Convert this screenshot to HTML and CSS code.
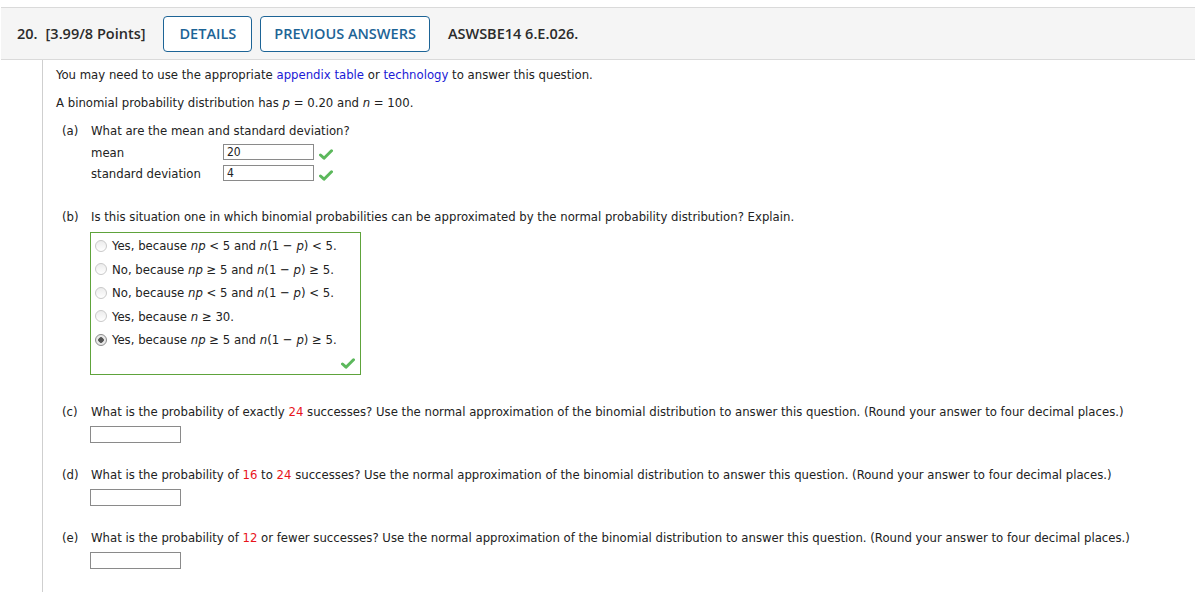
FILE: index.html
```html
<!DOCTYPE html>
<html lang="en">
<head>
    <meta charset="UTF-8">
    <title>Question 20</title>
    <link rel="stylesheet" href="styles.css">
</head>
<body>
    <div class="question-header">
        <span class="q-number">20.</span>
        <span class="q-points">[3.99/8 Points]</span>
        <button class="header-btn">DETAILS</button>
        <button class="header-btn prev-btn">PREVIOUS ANSWERS</button>
        <span class="q-code">ASWSBE14 6.E.026.</span>
    </div>

    <div class="question-body">
        <p class="intro">You may need to use the appropriate <a href="#">appendix table</a> or <a href="#">technology</a> to answer this question.</p>
        <p class="intro">A binomial probability distribution has <i>p</i> = 0.20 and <i>n</i> = 100.</p>

        <div class="part">
            <div class="part-row">
                <span class="part-label">(a)</span>
                <span>What are the mean and standard deviation?</span>
            </div>
            <div class="answer-grid">
                <span>mean</span>
                <span class="answer-box filled">20</span>
                <svg class="check" viewBox="0 0 14 11"><path d="M1.5 6 L5 9.2 L12.5 1.8" /></svg>
                <span>standard deviation</span>
                <span class="answer-box filled">4</span>
                <svg class="check" viewBox="0 0 14 11"><path d="M1.5 6 L5 9.2 L12.5 1.8" /></svg>
            </div>
        </div>

        <div class="part part-b">
            <div class="part-row">
                <span class="part-label">(b)</span>
                <span>Is this situation one in which binomial probabilities can be approximated by the normal probability distribution? Explain.</span>
            </div>
            <div class="choice-box">
                <div class="choice"><span class="radio"></span><span>Yes, because <i>np</i> &lt; 5 and <i>n</i>(1 &minus; <i>p</i>) &lt; 5.</span></div>
                <div class="choice"><span class="radio"></span><span>No, because <i>np</i> &ge; 5 and <i>n</i>(1 &minus; <i>p</i>) &ge; 5.</span></div>
                <div class="choice"><span class="radio"></span><span>No, because <i>np</i> &lt; 5 and <i>n</i>(1 &minus; <i>p</i>) &lt; 5.</span></div>
                <div class="choice"><span class="radio"></span><span>Yes, because <i>n</i> &ge; 30.</span></div>
                <div class="choice"><span class="radio selected"></span><span>Yes, because <i>np</i> &ge; 5 and <i>n</i>(1 &minus; <i>p</i>) &ge; 5.</span></div>
                <svg class="check box-check" viewBox="0 0 14 11"><path d="M1.5 6 L5 9.2 L12.5 1.8" /></svg>
            </div>
        </div>

        <div class="part part-c">
            <div class="part-row">
                <span class="part-label">(c)</span>
                <span>What is the probability of exactly <span class="num">24</span> successes? Use the normal approximation of the binomial distribution to answer this question. (Round your answer to four decimal places.)</span>
            </div>
            <span class="answer-box empty"></span>
        </div>

        <div class="part part-next">
            <div class="part-row">
                <span class="part-label">(d)</span>
                <span>What is the probability of <span class="num">16</span> to <span class="num">24</span> successes? Use the normal approximation of the binomial distribution to answer this question. (Round your answer to four decimal places.)</span>
            </div>
            <span class="answer-box empty"></span>
        </div>

        <div class="part part-next">
            <div class="part-row">
                <span class="part-label">(e)</span>
                <span>What is the probability of <span class="num">12</span> or fewer successes? Use the normal approximation of the binomial distribution to answer this question. (Round your answer to four decimal places.)</span>
            </div>
            <span class="answer-box empty"></span>
        </div>
    </div>
</body>
</html>
```
FILE: styles.css
```css
body {
    margin: 0;
    background-color: white;
    color: #222;
    font-family: "DejaVu Sans Condensed", "DejaVu Sans", sans-serif;
    font-size: 13px;
    overflow: hidden;
}

.question-header {
    display: flex;
    align-items: center;
    height: 51px;
    margin-top: 7px;
    margin-left: 1px;
    padding-left: 16px;
    background-color: #f5f5f5;
    border-top: 1px solid #dadada;
    border-bottom: 1px solid #dadada;
    font-family: "Open Sans", sans-serif;
    font-weight: 600;
    font-size: 14.5px;
    color: #2b2b2b;
}

.q-number {
    margin-right: 8px;
}

.q-points {
    margin-right: 18px;
}

.header-btn {
    height: 36px;
    padding: 0 15px;
    margin-right: 8px;
    background-color: white;
    border: 1px solid #1d6496;
    border-radius: 4px;
    color: #1d6496;
    font-family: "Open Sans", sans-serif;
    font-weight: 600;
    font-size: 14.5px;
}

.prev-btn {
    padding: 0 13px;
}

.q-code {
    margin-left: 10px;
}

.question-body {
    box-sizing: border-box;
    margin-left: 42px;
    padding: 7px 0 10px 13px;
    border-left: 1px solid #cfcfcf;
    min-height: calc(100vh - 60px);
}

.intro {
    margin: 0 0 12px 0;
    line-height: 16px;
}

.intro a {
    color: #1a1ad6;
    text-decoration: none;
}

.part {
    margin-left: 6px;
}

.part-row {
    display: flex;
    line-height: 16px;
}

.part-label {
    width: 29px;
    flex-shrink: 0;
}

.answer-grid {
    display: grid;
    grid-template-columns: 132px 91px 20px;
    row-gap: 5px;
    align-items: center;
    margin: 5px 0 0 29px;
}

.answer-box {
    display: block;
    box-sizing: border-box;
    width: 91px;
    height: 16px;
    border: 1px solid #8a8a8a;
    background-color: white;
    font-size: 12px;
    line-height: 14px;
    padding-left: 3px;
    color: #222;
}

.check {
    width: 14px;
    height: 11px;
    margin: 4px 0 0 5px;
}

.check path {
    fill: none;
    stroke: #5cb85c;
    stroke-width: 3;
    stroke-linecap: round;
    stroke-linejoin: round;
}

.part-b {
    margin-top: 28px;
}

.choice-box {
    position: relative;
    width: 271px;
    height: 143px;
    box-sizing: border-box;
    margin: 7px 0 0 28px;
    padding: 1px 0 0 4px;
    border: 1px solid #5ea33b;
}

.choice {
    display: flex;
    align-items: center;
    height: 23.5px;
}

.radio {
    box-sizing: border-box;
    width: 12px;
    height: 12px;
    margin-right: 5px;
    border: 1px solid #c9c9c9;
    border-radius: 50%;
    background: linear-gradient(#ececec, #ffffff);
}

.radio.selected {
    border-color: #8c8c8c;
    background: radial-gradient(circle, #555 0, #555 2.5px, #e8e8e8 3px);
}

.box-check {
    position: absolute;
    right: 5px;
    bottom: 5px;
}

.part-c {
    margin-top: 29px;
}

.part .empty {
    margin: 6px 0 0 28px;
    height: 17px;
}

.part-next {
    margin-top: 24px;
}

.num {
    color: #e8141c;
}
```
